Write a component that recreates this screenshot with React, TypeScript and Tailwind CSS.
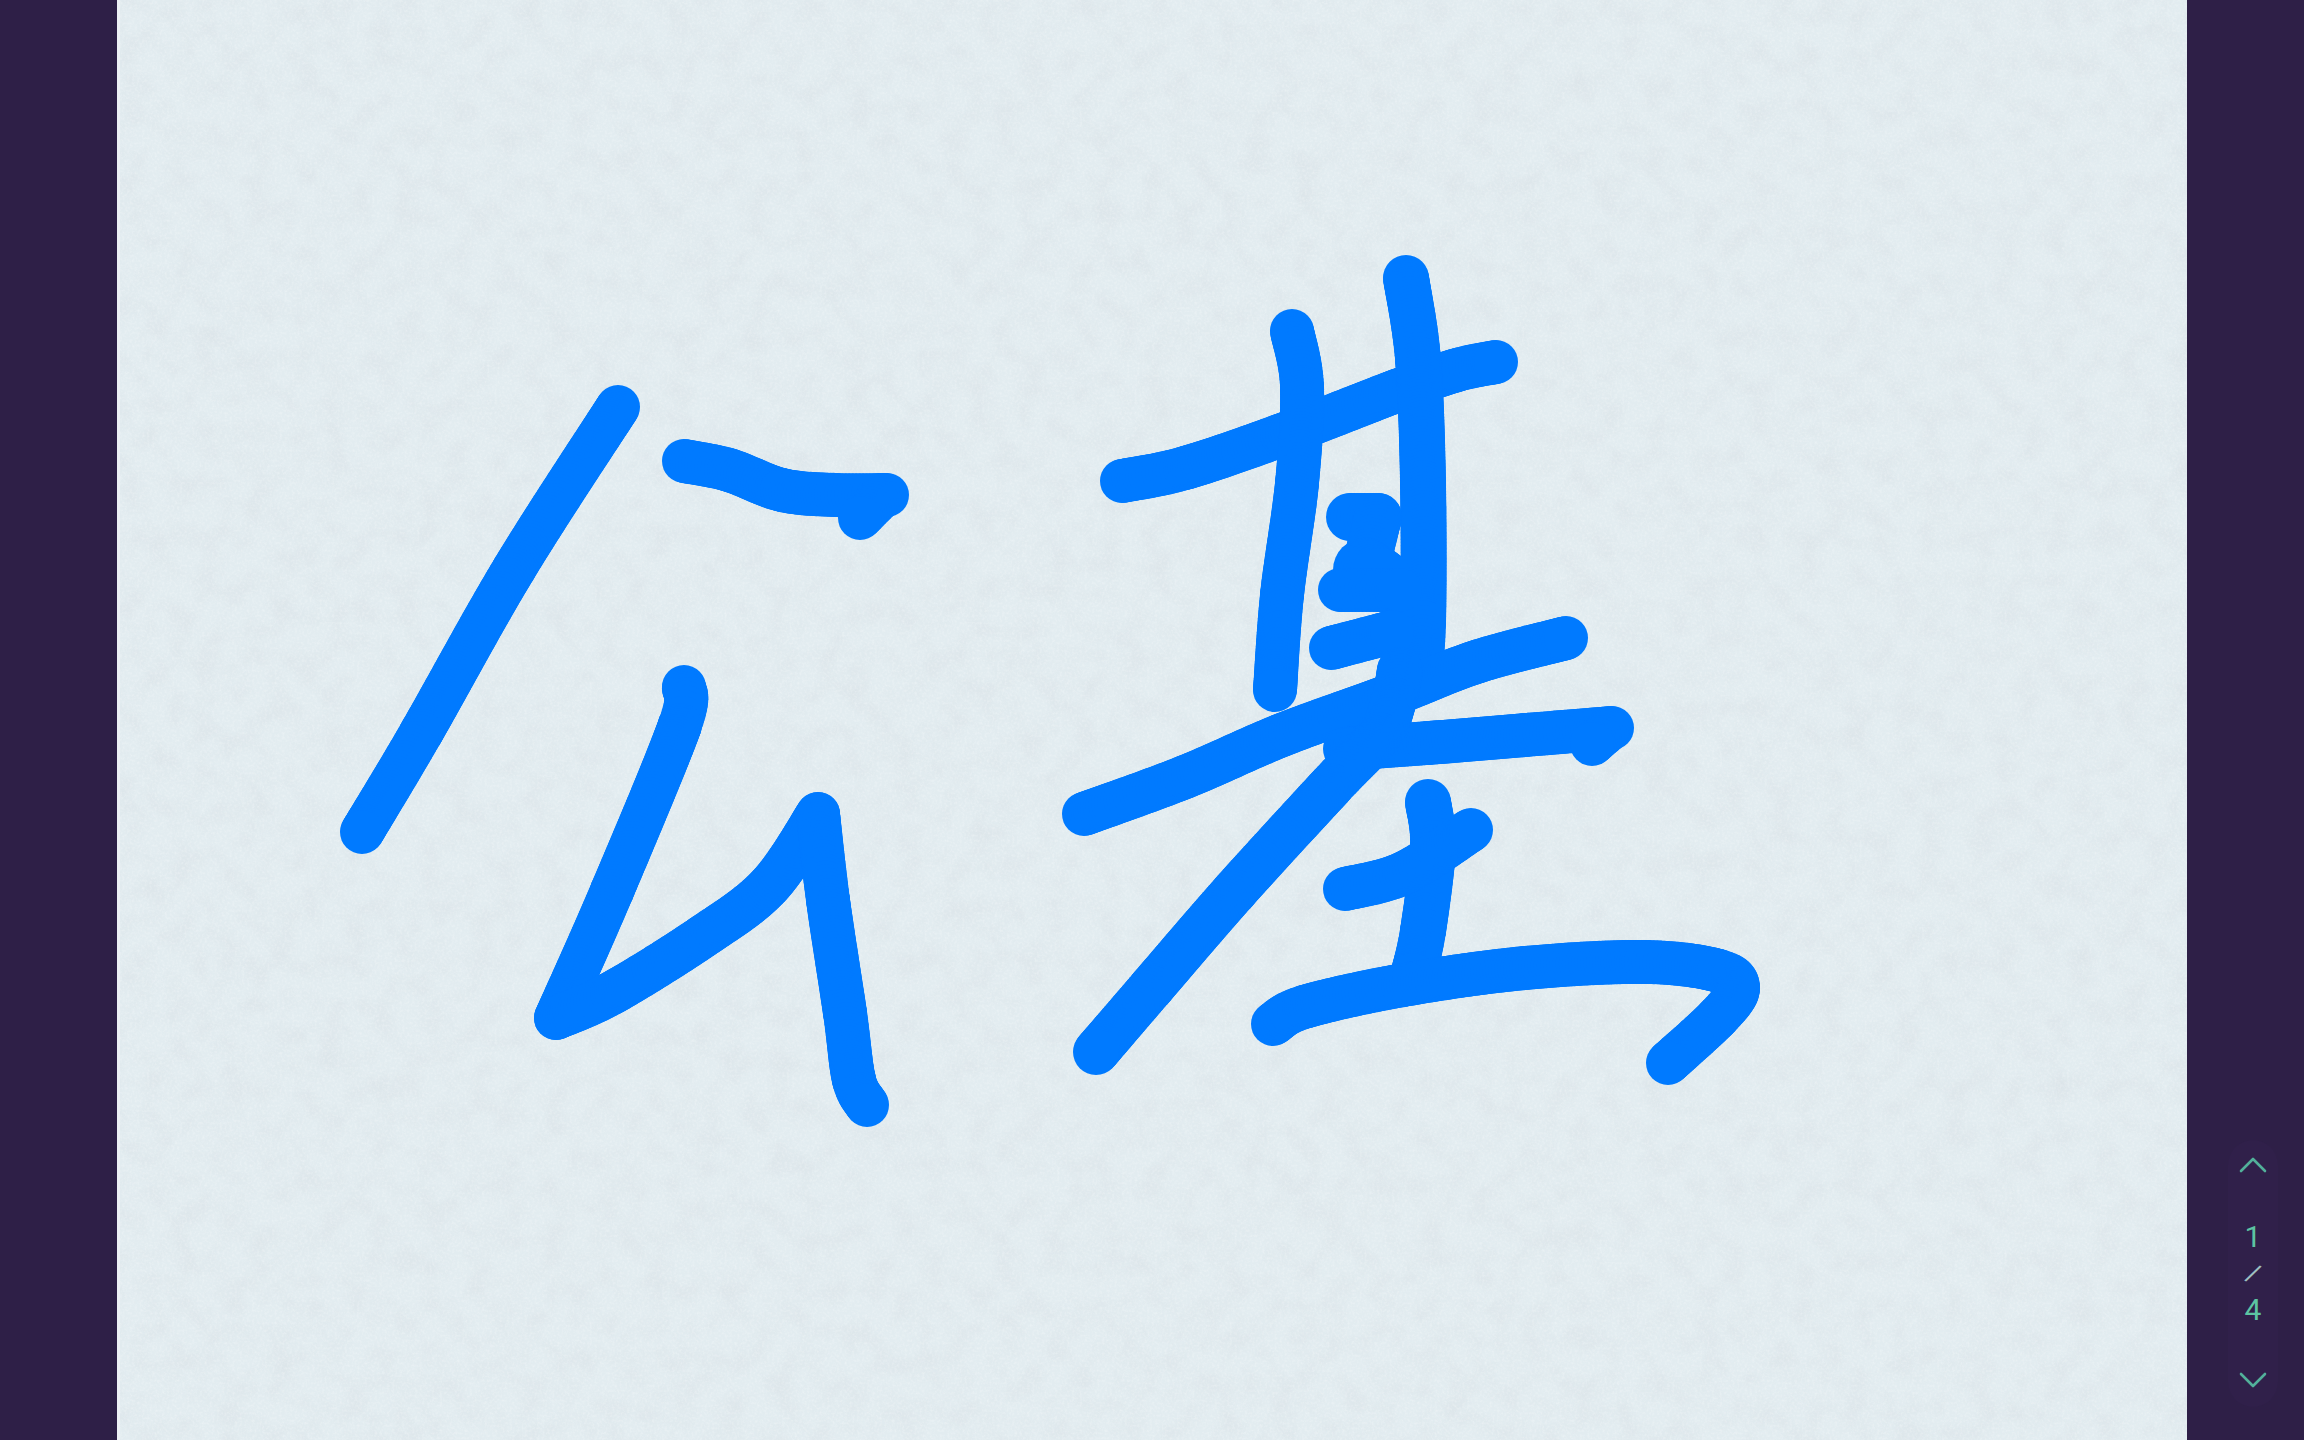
import React from "react";

const INK = "#007AFF";

// hand written strokes, in page pixels
const STROKES: { pts: number[][]; r?: number }[] = [
  // left character
  { pts: [[618, 407], [514, 569], [421, 733], [362, 832]] },
  { pts: [[684, 461], [729, 470], [782, 490], [836, 495], [887, 495]] },
  { pts: [[880, 498], [860, 518]] },
  { pts: [[684, 687], [680, 725], [612, 891], [556, 1018]] },
  { pts: [[556, 1018], [612, 993], [702, 937], [769, 886], [818, 814]] },
  { pts: [[818, 814], [828, 900], [845, 1013], [854, 1080], [867, 1105]] },
  // right character
  { pts: [[1122, 481], [1185, 468], [1282, 435], [1399, 390], [1457, 370], [1496, 362]] },
  { pts: [[1292, 331], [1302, 387], [1297, 483], [1282, 595], [1275, 690]] },
  { pts: [[1406, 278], [1418, 359], [1423, 483], [1423, 623], [1418, 679]], r: 23 },
  // the knot between the two verticals
  { pts: [[1350, 517], [1378, 517]], r: 24 },
  { pts: [[1378, 517], [1365, 570]], r: 24 },
  { pts: [[1365, 570], [1380, 580]], r: 32 },
  { pts: [[1340, 590], [1400, 590]] },
  { pts: [[1331, 648], [1392, 632]] },
  { pts: [[1084, 814], [1185, 777], [1282, 735], [1389, 696], [1476, 662], [1566, 638]] },
  { pts: [[1345, 749], [1428, 743], [1525, 735], [1612, 728]] },
  { pts: [[1608, 730], [1592, 744]] },
  { pts: [[1400, 670], [1394, 700], [1379, 735], [1331, 786], [1234, 892], [1151, 988], [1096, 1052]], r: 23 },
  { pts: [[1428, 802], [1433, 847], [1423, 931], [1413, 976]], r: 23 },
  { pts: [[1345, 889], [1404, 873], [1471, 830]] },
  {
    pts: [
      [1273, 1024], [1304, 1007], [1403, 985], [1525, 968], [1646, 962], [1719, 971],
      [1738, 988], [1719, 1016], [1668, 1063],
    ],
  },
];

// walk a catmull-rom through the points, one dab of the brush every 3px or so
function dabs(p: number[][]) {
  const out: number[][] = [];
  for (let i = 0; i < p.length - 1; i++) {
    const a = p[Math.max(i - 1, 0)];
    const b = p[i];
    const c = p[i + 1];
    const e = p[Math.min(i + 2, p.length - 1)];
    const n = Math.ceil(Math.hypot(c[0] - b[0], c[1] - b[1]) / 3);
    for (let k = 0; k <= n; k++) {
      const t = k / n;
      const f = (j: number) =>
        0.5 *
        (2 * b[j] +
          (c[j] - a[j]) * t +
          (2 * a[j] - 5 * b[j] + 4 * c[j] - e[j]) * t * t +
          (3 * b[j] - a[j] - 3 * c[j] + e[j]) * t * t * t);
      out.push([f(0), f(1)]);
    }
  }
  return out;
}

function Paper() {
  return (
    <svg className="absolute inset-0 w-full h-full" preserveAspectRatio="none">
      <filter id="mottle" x="0" y="0" width="100%" height="100%">
        <feTurbulence type="fractalNoise" baseFrequency="0.04" numOctaves="5" seed="7" />
        <feColorMatrix values="0 0 0 0 0.66  0 0 0 0 0.71  0 0 0 0 0.75  1.6 0 0 0 -0.62" />
      </filter>
      <filter id="grain" x="0" y="0" width="100%" height="100%">
        <feTurbulence type="fractalNoise" baseFrequency="0.4" numOctaves="2" seed="3" />
        <feColorMatrix values="0 0 0 0 1  0 0 0 0 1  0 0 0 0 1  1.8 0 0 0 -0.75" />
      </filter>
      <rect width="100%" height="100%" filter="url(#mottle)" opacity="0.45" />
      <rect width="100%" height="100%" filter="url(#grain)" opacity="0.3" />
    </svg>
  );
}

function Chevron({ down }: { down?: boolean }) {
  return (
    <svg width="28" height="18" viewBox="0 0 28 18" fill="none" stroke="#52b09a" strokeWidth="2.6" strokeLinecap="round" strokeLinejoin="round">
      <polyline points={down ? "2,3 14,15 26,3" : "2,15 14,3 26,15"} />
    </svg>
  );
}

function Pager() {
  return (
    <div className="w-[50px] h-[267px] mb-[33px] rounded-full bg-[#30204a] flex flex-col items-center text-[#5cc4a2] font-['Roboto',sans-serif]">
      <div className="mt-[16px]">
        <Chevron />
      </div>
      <div className="mt-[46px] text-[30px] leading-[34px]">1</div>
      <div className="mt-[2px] text-[26px] leading-[34px] text-[#9dbfc0] rotate-[25deg]">/</div>
      <div className="mt-[3px] text-[30px] leading-[34px]">4</div>
      <div className="mt-[44px]">
        <Chevron down />
      </div>
    </div>
  );
}

export default function App() {
  return (
    <div className="w-[2304px] h-[1440px] flex bg-[#2e1f47] overflow-hidden">
      <div className="w-[117px] shrink-0" />
      <div className="relative w-[2070px] shrink-0 bg-[#e2ecf0] border-l-[3px] border-[#eef1f6]">
        <Paper />
        <svg className="absolute inset-0 w-full h-full" viewBox="120 0 2067 1440" fill={INK}>
          {STROKES.map((s, i) => (
            <g key={i}>
              {dabs(s.pts).map(([x, y], k) => (
                <circle key={k} cx={x} cy={y} r={s.r ?? 22} />
              ))}
            </g>
          ))}
        </svg>
      </div>
      <div className="flex-1 flex flex-col justify-end items-center pl-[15px]">
        <Pager />
      </div>
    </div>
  );
}
